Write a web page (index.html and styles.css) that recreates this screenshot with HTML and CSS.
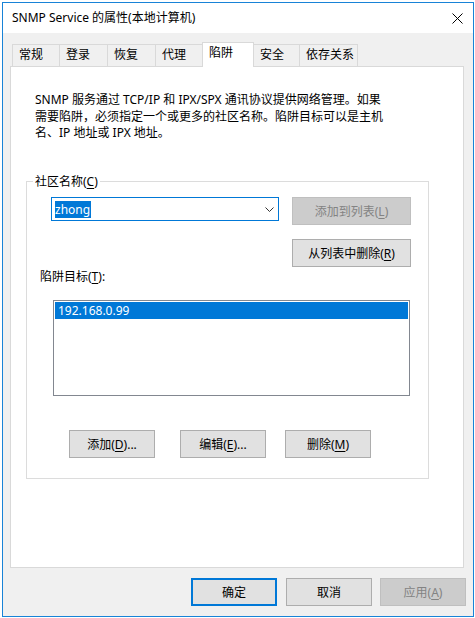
FILE: index.html
```html
<!DOCTYPE html>
<html>
	<head>
		<meta charset="utf-8">
		<title>SNMP Service 的属性</title>
		<link rel="stylesheet" href="styles.css">
	</head>
	<body>
		<div class="window">
			<div class="titlebar">
				<span class="title">SNMP Service 的属性(本地计算机)</span>
				<svg class="close" width="11" height="11" viewBox="0 0 11 11">
					<path d="M0.5 0.5 L10.5 10.5 M10.5 0.5 L0.5 10.5" stroke="#000" stroke-width="1" fill="none"/>
				</svg>
			</div>
			<div class="client">
				<div class="tabs">
					<div class="tab tab-general">常规</div>
					<div class="tab tab-logon">登录</div>
					<div class="tab tab-recovery">恢复</div>
					<div class="tab tab-agent">代理</div>
					<div class="tab tab-traps active">陷阱</div>
					<div class="tab tab-security">安全</div>
					<div class="tab tab-deps">依存关系</div>
				</div>
				<div class="panel">
					<p class="desc">SNMP 服务通过 TCP/IP 和 IPX/SPX 通讯协议提供网络管理。如果<br>需要陷阱，必须指定一个或更多的社区名称。陷阱目标可以是主机<br>名、IP 地址或 IPX 地址。</p>
					<div class="group">
						<div class="group-title">社区名称(<u>C</u>)</div>
						<div class="combo-row">
							<div class="combo">
								<span class="combo-text">zhong</span>
								<svg class="chevron" width="9" height="5" viewBox="0 0 9 5">
									<path d="M0.5 0.5 L4.5 4.5 L8.5 0.5" stroke="#333" stroke-width="1" fill="none"/>
								</svg>
							</div>
							<button class="btn btn-wide disabled">添加到列表(<u>L</u>)</button>
						</div>
						<button class="btn btn-wide btn-remove">从列表中删除(<u>R</u>)</button>
						<div class="field-label">陷阱目标(<u>T</u>):</div>
						<div class="listbox">
							<div class="list-item selected">192.168.0.99</div>
						</div>
						<div class="actions">
							<button class="btn btn-add">添加(<u>D</u>)...</button>
							<button class="btn btn-edit">编辑(<u>E</u>)...</button>
							<button class="btn btn-delete">删除(<u>M</u>)</button>
						</div>
					</div>
				</div>
				<div class="footer">
					<button class="btn default">确定</button>
					<button class="btn btn-cancel">取消</button>
					<button class="btn btn-apply disabled">应用(<u>A</u>)</button>
				</div>
			</div>
		</div>
	</body>
</html>
```

FILE: styles.css
```css
* {
  box-sizing: border-box;
}

body {
  margin: 0;
  background: #ffffff;
  font-family: "Noto Sans", "Noto Sans CJK SC", sans-serif;
  font-size: 12px;
  color: #000000;
}

u {
  text-decoration: underline;
  text-underline-offset: 2px;
}

/*** Window frame ***/

.window {
  margin: 2px 0 0 2px;
  width: 472px;
  height: 615px;
  border: 1px solid #1883d7;
  background: #f0f0f0;
  display: flex;
  flex-direction: column;
}

.titlebar {
  flex: none;
  height: 30px;
  background: #ffffff;
  display: flex;
  align-items: center;
  padding: 0 10px 0 9px;
}

.title {
  flex: 1;
  line-height: 16px;
}

.close {
  display: block;
}

.client {
  flex: 1;
  padding: 9px 7px 0 7px;
}

/*** Tabs ***/

.tabs {
  display: flex;
  align-items: flex-end;
  height: 24px;
  margin-left: 2px;
}

.tab {
  height: 22px;
  border: 1px solid #d9d9d9;
  border-bottom: 0;
  margin-left: -1px;
  padding-left: 6px;
  line-height: 20px;
  background: #f0f0f0;
  white-space: nowrap;
}

.tab:first-child {
  margin-left: 0;
}

.tab.active {
  height: 25px;
  margin-bottom: -1px;
  background: #ffffff;
  position: relative;
  z-index: 1;
}

.tab-general { width: 48px; }
.tab-logon { width: 49px; }
.tab-recovery { width: 49px; }
.tab-agent { width: 48px; }
.tab-traps { width: 52px; }
.tab-security { width: 47px; }
.tab-deps { width: 59px; }

/*** Page ***/

.panel {
  width: 454px;
  height: 502px;
  background: #ffffff;
  border: 1px solid #d9d9d9;
  padding: 25px 0 0 15px;
}

.desc {
  margin: 0;
  padding-left: 9px;
  height: 50px;
  line-height: 16.5px;
  white-space: nowrap;
}

.group {
  margin-top: 39px;
  width: 403px;
  height: 298px;
  border: 1px solid #dcdcdc;
  display: flex;
  flex-direction: column;
  align-items: flex-start;
}

.group-title {
  margin: -8px 0 0 6px;
  padding: 0 2px;
  line-height: 16px;
  background: #ffffff;
}

.combo-row {
  display: flex;
  align-items: flex-start;
  margin: 7px 0 0 24px;
}

.combo {
  width: 228px;
  height: 24px;
  border: 1px solid #0078d7;
  display: flex;
  align-items: center;
  padding: 0 4px 0 3px;
}

.combo-text {
  flex: none;
  background: #0078d7;
  color: #ffffff;
  line-height: 17px;
  padding-right: 1px;
}

.chevron {
  margin-left: auto;
  display: block;
}

/*** Buttons ***/

.btn {
  width: 86px;
  height: 28px;
  padding: 0;
  border: 1px solid #adadad;
  background: #e1e1e1;
  color: #000000;
  font: inherit;
  white-space: nowrap;
}

.btn-wide {
  width: 119px;
  margin-left: 13px;
}

.btn-remove {
  margin: 14px 0 0 265px;
}

.btn.disabled {
  background: #cccccc;
  border-color: #bfbfbf;
  color: #838383;
}

.btn.default {
  border: 2px solid #0078d7;
}

.field-label {
  margin: 2px 0 0 13px;
  line-height: 16px;
}

.listbox {
  margin: 15px 0 0 26px;
  width: 357px;
  height: 96px;
  border: 1px solid #828790;
  padding: 1px;
}

.list-item {
  height: 17px;
  line-height: 17px;
  padding-left: 3px;
}

.list-item.selected {
  background: #0078d7;
  color: #ffffff;
}

.actions {
  display: flex;
  margin: 34px 0 0 42px;
}

.btn-edit { margin-left: 25px; }
.btn-delete { margin-left: 19px; }

.footer {
  display: flex;
  justify-content: flex-end;
  margin-top: 10px;
}

.btn-cancel { margin-left: 9px; }
.btn-apply { margin-left: 8px; }
```
